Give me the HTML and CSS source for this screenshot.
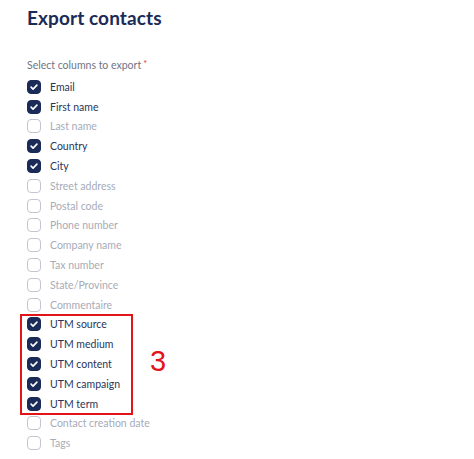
FILE: index.html
```html
<!DOCTYPE html>
<html>
<head>
<meta charset="utf-8">
<link rel="stylesheet" href="styles.css">
</head>
<body>
<div class="page">
  <h1 class="title">Export contacts</h1>
  <div class="field-label">Select columns to export<span class="req">*</span></div>
  <div class="list">
    <div class="row on"><span class="box"><svg viewBox="0 0 14 14"><path d="M3.6 7.2l2.3 2.2 4.5-4.6"/></svg></span><span class="lbl">Email</span></div>
    <div class="row on"><span class="box"><svg viewBox="0 0 14 14"><path d="M3.6 7.2l2.3 2.2 4.5-4.6"/></svg></span><span class="lbl">First name</span></div>
    <div class="row"><span class="box"></span><span class="lbl">Last name</span></div>
    <div class="row on"><span class="box"><svg viewBox="0 0 14 14"><path d="M3.6 7.2l2.3 2.2 4.5-4.6"/></svg></span><span class="lbl">Country</span></div>
    <div class="row on"><span class="box"><svg viewBox="0 0 14 14"><path d="M3.6 7.2l2.3 2.2 4.5-4.6"/></svg></span><span class="lbl">City</span></div>
    <div class="row"><span class="box"></span><span class="lbl">Street address</span></div>
    <div class="row"><span class="box"></span><span class="lbl">Postal code</span></div>
    <div class="row"><span class="box"></span><span class="lbl">Phone number</span></div>
    <div class="row"><span class="box"></span><span class="lbl">Company name</span></div>
    <div class="row"><span class="box"></span><span class="lbl">Tax number</span></div>
    <div class="row"><span class="box"></span><span class="lbl">State/Province</span></div>
    <div class="row"><span class="box"></span><span class="lbl">Commentaire</span></div>
    <div class="group">
      <div class="highlight">
        <div class="row on"><span class="box"><svg viewBox="0 0 14 14"><path d="M3.6 7.2l2.3 2.2 4.5-4.6"/></svg></span><span class="lbl">UTM source</span></div>
        <div class="row on"><span class="box"><svg viewBox="0 0 14 14"><path d="M3.6 7.2l2.3 2.2 4.5-4.6"/></svg></span><span class="lbl">UTM medium</span></div>
        <div class="row on"><span class="box"><svg viewBox="0 0 14 14"><path d="M3.6 7.2l2.3 2.2 4.5-4.6"/></svg></span><span class="lbl">UTM content</span></div>
        <div class="row on"><span class="box"><svg viewBox="0 0 14 14"><path d="M3.6 7.2l2.3 2.2 4.5-4.6"/></svg></span><span class="lbl">UTM campaign</span></div>
        <div class="row on"><span class="box"><svg viewBox="0 0 14 14"><path d="M3.6 7.2l2.3 2.2 4.5-4.6"/></svg></span><span class="lbl">UTM term</span></div>
      </div>
      <span class="mark">3</span>
    </div>
    <div class="row"><span class="box"></span><span class="lbl">Contact creation date</span></div>
    <div class="row"><span class="box"></span><span class="lbl">Tags</span></div>
  </div>
</div>
</body>
</html>
```
FILE: styles.css
```css
html, body {
  margin: 0;
  padding: 0;
  background: #ffffff;
}
.page {
  padding: 6px 0 0 27px;
  font-family: "Lato", "Noto Sans", sans-serif;
}
.title {
  margin: 0;
  font-size: 19px;
  line-height: 24px;
  font-weight: 700;
  color: #1b2b58;
  letter-spacing: 0.1px;
}
.field-label {
  margin-top: 27px;
  font-size: 10.5px;
  line-height: 14px;
  color: #6f7484;
}
.req {
  color: #e0303a;
  margin-left: 2px;
  font-size: 9px;
  vertical-align: 2px;
}
.list {
  margin-top: 5px;
  display: flex;
  flex-direction: column;
}
.row {
  display: flex;
  align-items: center;
  height: 19.8px;
  gap: 9px;
}
.box {
  width: 14px;
  height: 14px;
  box-sizing: border-box;
  border: 1px solid #c3c6d0;
  border-radius: 4px;
  background: #fff;
  flex: none;
  display: flex;
}
.row.on .box {
  background: #1b2b58;
  border-color: #1b2b58;
}
.box svg {
  width: 100%;
  height: 100%;
  fill: none;
  stroke: #fff;
  stroke-width: 1.9;
  stroke-linecap: round;
  stroke-linejoin: round;
}
.lbl {
  font-size: 10.5px;
  color: #a7abb8;
}
.row.on .lbl {
  color: #2a3557;
}
.group {
  display: flex;
  align-items: center;
}
.highlight {
  position: relative;
  width: 106px;
}
.highlight::before {
  content: "";
  position: absolute;
  left: -7px;
  right: 0;
  top: -1px;
  bottom: -1px;
  border: 2px solid #e2141a;
}
.mark {
  margin-left: 17px;
  margin-top: -6px;
  font-family: "Liberation Sans", sans-serif;
  font-size: 29px;
  color: #e2141a;
  line-height: 1;
}
```
